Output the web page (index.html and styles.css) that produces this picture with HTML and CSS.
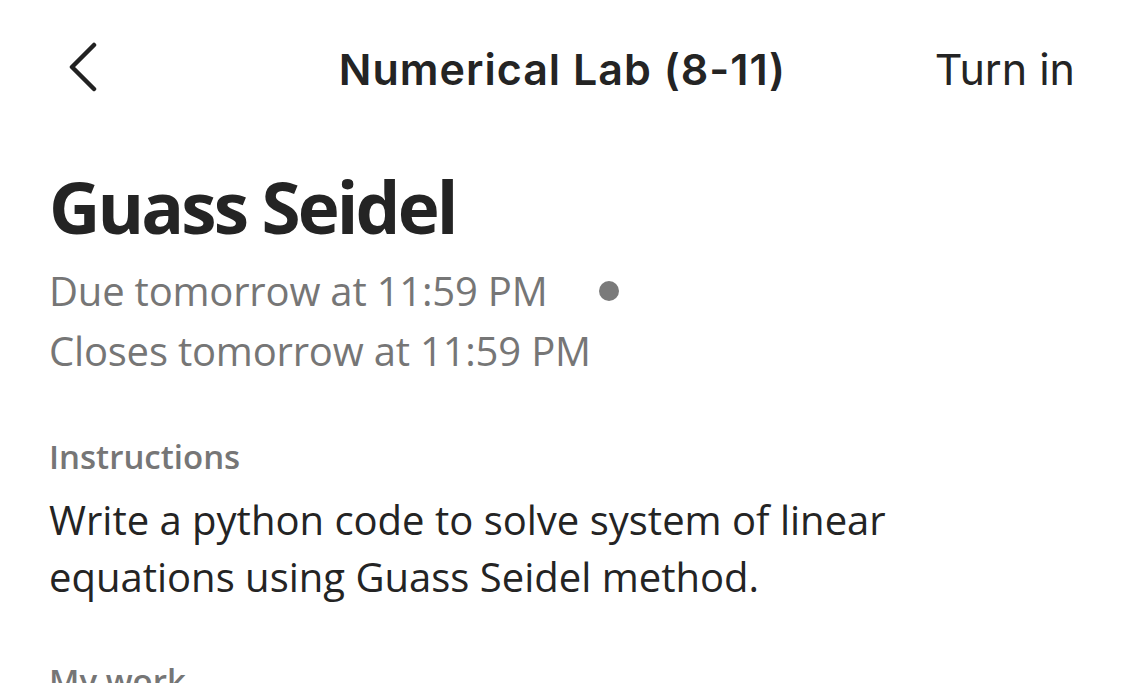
FILE: index.html
```html
<!DOCTYPE html>
<html lang="en">
<head>
<meta charset="utf-8">
<title>Guass Seidel</title>
<link rel="stylesheet" href="styles.css">
</head>
<body>
<div class="screen">
  <header class="navbar">
    <button class="back" aria-label="Back">
      <svg width="30" height="50" viewBox="0 0 30 50"><path d="M26 3 L4 25 L26 47" fill="none" stroke="#222" stroke-width="4.5" stroke-linecap="round" stroke-linejoin="round"/></svg>
    </button>
    <h1 class="nav-title">Numerical Lab (8-11)</h1>
    <button class="turn-in">Turn in</button>
  </header>
  <main class="content">
    <h2 class="title">Guass Seidel</h2>
    <div class="meta">
      <div class="meta-row"><span>Due tomorrow at 11:59 PM</span><span class="dot"></span></div>
      <div class="meta-row"><span>Closes tomorrow at 11:59 PM</span></div>
    </div>
    <section class="section">
      <h3 class="section-label">Instructions</h3>
      <p class="body-text">Write a python code to solve system of linear equations using Guass Seidel method.</p>
    </section>
    <section class="section">
      <h3 class="section-label">My work</h3>
    </section>
  </main>
</div>
</body>
</html>
```

FILE: styles.css
```css
* { box-sizing: border-box; }
html, body { margin: 0; padding: 0; background: #fff; }
body { width: 1125px; height: 683px; overflow: hidden; font-family: "Open Sans", "Noto Sans", sans-serif; color: #242424; }
.screen { display: flex; flex-direction: column; }
.navbar {
  height: 138px;
  display: grid;
  grid-template-columns: 1fr auto 1fr;
  align-items: center;
  padding: 0 50px;
  font-family: Inter, "Liberation Sans", sans-serif;
}
.back { justify-self: start; background: none; border: 0; padding: 0; margin: 0 0 4px 18px; display: flex; }
.nav-title { margin: 0; font-size: 43px; font-weight: 600; color: #242424; letter-spacing: 1px; }
.turn-in { justify-self: end; background: none; border: 0; padding: 0; font-family: inherit; font-size: 43px; font-weight: 400; color: #242424; }
.content { padding: 27px 49px 0; }
.title { margin: 0; font-size: 71px; font-weight: 700; line-height: 84px; color: #242424; letter-spacing: -2.9px; }
.meta { margin-top: 12px; color: #767676; font-size: 40px; line-height: 60px; letter-spacing: -0.2px; }
.meta-row { display: flex; align-items: center; gap: 52px; }
.dot { width: 20px; height: 20px; border-radius: 50%; background: #7a7a7a; }
.section { margin-top: 54px; }
.section-label { margin: 0; font-size: 33px; font-weight: 600; color: #767676; line-height: 44px; }
.body-text { margin: 12px 0 0; font-size: 40px; line-height: 57px; color: #242424; max-width: 900px; }
```
